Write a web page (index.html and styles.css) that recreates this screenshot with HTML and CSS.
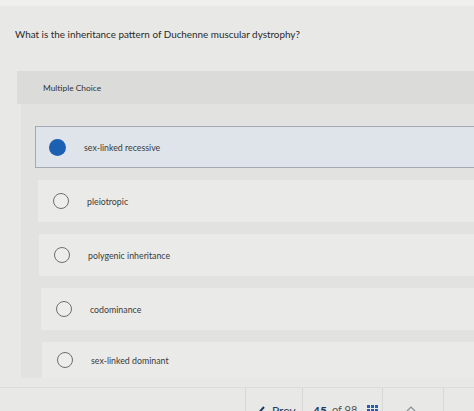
FILE: index.html
```html
<!DOCTYPE html>
<html lang="en">
<head>
    <meta charset="UTF-8">
    <meta name="viewport" content="width=device-width, initial-scale=1.0">
    <title>Question 45</title>
    <link rel="stylesheet" href="styles.css">
</head>
<body>
    <!-- question prompt -->
    <div class="question">What is the inheritance pattern of Duchenne muscular dystrophy?</div>

    <!-- answer panel -->
    <div class="panel">
        <div class="panel-head">Multiple Choice</div>
        <div class="panel-body">
            <label class="choice selected">
                <span class="radio"></span>
                <span class="choice-text">sex-linked recessive</span>
            </label>
            <label class="choice shift-1">
                <span class="radio"></span>
                <span class="choice-text">pleiotropic</span>
            </label>
            <label class="choice shift-2">
                <span class="radio"></span>
                <span class="choice-text">polygenic inheritance</span>
            </label>
            <label class="choice shift-3">
                <span class="radio"></span>
                <span class="choice-text">codominance</span>
            </label>
            <label class="choice shift-4">
                <span class="radio"></span>
                <span class="choice-text">sex-linked dominant</span>
            </label>
        </div>
    </div>

    <!-- bottom pager -->
    <nav class="pager">
        <div class="pager-item prev">
            <svg width="8" height="12" viewBox="0 0 8 12"><path d="M6 1 L1.5 6 L6 11" fill="none" stroke="#1f3a63" stroke-width="2"/></svg>
            <span>Prev</span>
        </div>
        <div class="pager-item count">
            <span class="num">45</span><span class="of">of 98</span>
            <svg width="11" height="11" viewBox="0 0 11 11" fill="#2a5bb0">
                <rect x="0" y="0" width="3" height="3"/><rect x="4" y="0" width="3" height="3"/><rect x="8" y="0" width="3" height="3"/>
                <rect x="0" y="4" width="3" height="3"/><rect x="4" y="4" width="3" height="3"/><rect x="8" y="4" width="3" height="3"/>
                <rect x="0" y="8" width="3" height="3"/><rect x="4" y="8" width="3" height="3"/><rect x="8" y="8" width="3" height="3"/>
            </svg>
        </div>
        <div class="pager-item next">
            <svg width="10" height="8" viewBox="0 0 10 8"><path d="M1 6 L5 2 L9 6" fill="none" stroke="#8a8f96" stroke-width="1.2"/></svg>
        </div>
        <div class="pager-item tail"></div>
    </nav>
</body>
</html>
```

FILE: styles.css
```css
* {
    margin: 0;
    padding: 0;
    box-sizing: border-box;
}

html, body {
    overflow: hidden;
}

body {
    font-family: Lato, "Open Sans", Arial, sans-serif;
    color: #2b2b2b;
    background: #e8e8e6;
    border-top: 6px solid #efefed;
}

/* question */
.question {
    padding: 21px 0 0 15px;
    font-size: 9.9px;
    line-height: 14px;
    color: #2a2a2a;
}

/* panel */
.panel {
    margin: 30px 0 0 17px;
}

.panel-head {
    height: 33px;
    background: #dbdbd9;
    padding-left: 26px;
    display: flex;
    align-items: center;
    font-size: 8.4px;
    color: #333;
}

.panel-body {
    margin-left: 4px;
    background: #e2e2e0;
    padding: 22px 0 0 15px;
    display: flex;
    flex-direction: column;
    gap: 12px;
}

/* choices */
.choice {
    height: 42px;
    display: flex;
    align-items: center;
    background: #eaeae8;
    padding-left: 15px;
    gap: 18px;
    font-size: 8.8px;
    color: #3a3a3a;
}

.choice.selected {
    margin-left: -1px;
    background: #dee4e9;
    border: 1px solid #a2abb2;
    border-right: none;
    padding-left: 13px;
}

.shift-1 { margin-left: 2px; }
.shift-2 { margin-left: 3px; }
.shift-3 { margin-left: 5px; }
.shift-4 { margin-left: 6px; height: 36px; }

.radio {
    width: 16px;
    height: 16px;
    border-radius: 50%;
    border: 1px solid #6e6e6e;
    background: #ededeb;
    flex-shrink: 0;
}

.selected .radio {
    width: 17px;
    height: 17px;
    border: none;
    background: #1c60b4;
}

/* pager */
.pager {
    margin-top: 9px;
    height: 30px;
    border-top: 1px solid #dcdcda;
    display: flex;
    justify-content: flex-end;
}

.pager-item {
    height: 30px;
    border-left: 1px solid #d8d8d6;
    display: flex;
    align-items: flex-start;
    padding-top: 15px;
    font-size: 12px;
    color: #1f3a63;
    gap: 6px;
}

.prev {
    width: 57px;
    padding-left: 12px;
}

.prev svg {
    margin-top: 3px;
}

.count {
    width: 80px;
    padding-left: 10px;
    gap: 0;
}

.count .num {
    font-weight: bold;
    margin-right: 5px;
}

.count .of {
    color: #555;
    font-size: 11px;
    margin-right: 10px;
}

.count svg {
    margin-top: 2px;
}

.next {
    width: 61px;
    padding-left: 23px;
}

.next svg {
    margin-top: 2px;
}

.tail {
    width: 31px;
}
```
